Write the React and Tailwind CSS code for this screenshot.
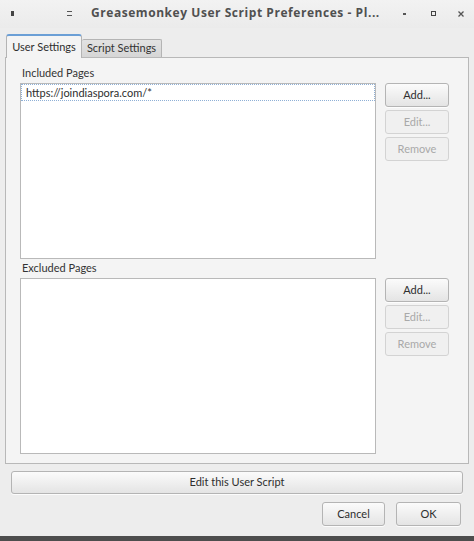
import React from "react";

function Btn({ children, disabled, className = "" }) {
  return (
    <div
      className={
        "flex items-center justify-center rounded-[3px] border text-[11px] " +
        (disabled
          ? "border-[#d3d3d3] bg-[#f0f0f0] text-[#a9a9a9] "
          : "border-[#b4b4b4] bg-gradient-to-b from-[#fbfbfb] to-[#e4e4e4] text-[#2e2e2e] shadow-[0_1px_0_rgba(255,255,255,0.8)] ") +
        className
      }
    >
      {children}
    </div>
  );
}

function Section({ label, rows }) {
  return (
    <div className="flex flex-col">
      <div className="h-[18px] pl-[2px] pt-[1px] text-[11px] leading-[14px] text-[#333]">{label}</div>
      <div className="flex gap-[9px]">
        <div className="h-[176px] w-[356px] border border-[#b9b9b9] bg-white">
          {rows.map((r) => (
            <div
              key={r}
              className="h-[17px] border border-dotted border-[#8fb0d6] pl-[4px] text-[11px] leading-[15px] text-[#2e2e2e]"
            >
              {r}
            </div>
          ))}
        </div>
        <div className="flex w-[64px] flex-col gap-[3px]">
          <Btn className="h-[24px]">Add...</Btn>
          <Btn className="h-[24px]" disabled>
            Edit...
          </Btn>
          <Btn className="h-[24px]" disabled>
            Remove
          </Btn>
        </div>
      </div>
    </div>
  );
}

export default function App() {
  return (
    <div
      className="flex h-[541px] w-[474px] flex-col bg-[#ededed]"
      style={{ fontFamily: "Lato, 'DejaVu Sans', sans-serif" }}
    >
      {/* title bar */}
      <div className="relative flex h-[28px] shrink-0 items-center bg-gradient-to-b from-[#f2f2f2] to-[#ebebeb]">
        <div className="absolute left-[11px] top-[11px] h-[5px] w-[3px] bg-[#444]" />
        <div className="absolute left-[67px] top-[11px] flex h-[5px] w-[5px] flex-col justify-between">
          <div className="h-[1px] w-full bg-[#555]" />
          <div className="h-[1px] w-full bg-[#555]" />
        </div>
        <div
          className="absolute left-[91px] top-[5px] text-[12px] font-bold leading-[16px] tracking-[0.55px] text-[#505050]"
          style={{ fontFamily: "'Open Sans', Lato, sans-serif" }}
        >
          Greasemonkey User Script Preferences - Pl...
        </div>
        <div className="absolute left-[403px] top-[13px] h-[2px] w-[3px] bg-[#555]" />
        <div className="absolute left-[431px] top-[11px] h-[5px] w-[5px] border border-[#444]" />
        <svg className="absolute left-[458px] top-[11px]" width="6" height="6" viewBox="0 0 6 6">
          <path d="M0.5 0.5 L5.5 5.5 M5.5 0.5 L0.5 5.5" stroke="#555" strokeWidth="1.3" />
        </svg>
      </div>

      {/* tabs + panel */}
      <div className="mt-[6px] flex flex-col px-[5px]">
        <div className="flex items-end pl-[1px]">
          <div className="relative z-10 -mb-[1px] flex h-[24px] w-[76px] items-center justify-center rounded-t-[3px] border border-b-0 border-[#b4b4b4] border-t-[2px] border-t-[#6b9fd6] bg-[#f4f4f4] text-[11px] text-[#2e2e2e]">
            User Settings
          </div>
          <div className="flex h-[18px] w-[80px] items-center justify-center rounded-t-[2px] border border-b-0 border-l-0 border-[#b4b4b4] bg-gradient-to-b from-[#e2e2e2] to-[#d6d6d6] text-[11px] text-[#333]">
            Script Settings
          </div>
        </div>
        <div className="flex h-[407px] flex-col gap-[1px] border border-[#b8b8b8] bg-[#f4f4f4] pl-[14px] pt-[7px]">
          <Section label="Included Pages" rows={["https://joindiaspora.com/*"]} />
          <Section label="Excluded Pages" rows={[]} />
        </div>
      </div>

      <div className="mt-[7px] px-[11px]">
        <Btn className="h-[23px] w-[452px]">Edit this User Script</Btn>
      </div>
      <div className="mt-[8px] flex justify-end gap-[11px] pr-[13px]">
        <Btn className="h-[24px] w-[63px]">Cancel</Btn>
        <Btn className="h-[24px] w-[65px]">OK</Btn>
      </div>
      <div className="mt-auto h-[5px] bg-[#4d4d4d]" />
    </div>
  );
}
